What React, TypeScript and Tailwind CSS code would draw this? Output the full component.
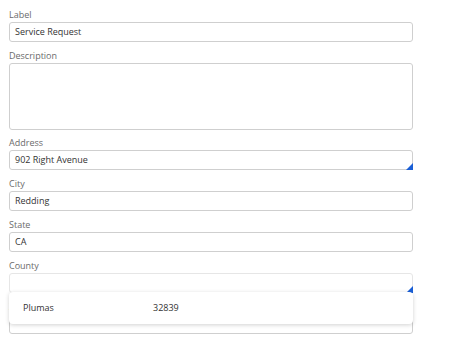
import React from "react";

const font = { fontFamily: '"Open Sans", "Liberation Sans", sans-serif' };

const Corner = () => (
  <svg className="absolute right-[-1px] bottom-[-1px]" width="7" height="7" viewBox="0 0 7 7">
    <polygon points="7,0 7,7 0,7" fill="#1a5fd6" />
  </svg>
);

const Field = (props: { label: string; value?: string; corner?: boolean; light?: boolean }) => (
  <div className="mb-[7px]">
    <div className="text-[9px] leading-[14px] text-[#6b6b6b]">{props.label}</div>
    <div
      className={
        "relative h-[20px] rounded-[3px] border bg-white px-[5px] text-[9px] leading-[18px] text-[#333] " +
        (props.light ? "border-[#e6e6e6]" : "border-[#cfcfcf]")
      }
    >
      {props.value}
      {props.corner && <Corner />}
    </div>
  </div>
);

export default function App() {
  return (
    <div className="w-[474px] h-[355px] bg-white overflow-hidden" style={font}>
      <div className="relative w-[404px] ml-[9px] pt-[8px]">
        <Field label="Label" value="Service Request" />
        <div className="mb-[6px]">
          <div className="text-[9px] leading-[14px] text-[#6b6b6b]">Description</div>
          <div className="h-[67px] rounded-[3px] border border-[#cfcfcf] bg-white" />
        </div>
        <Field label="Address" value="902 Right Avenue" corner />
        <Field label="City" value="Redding" />
        <Field label="State" value="CA" />
        <div className="relative">
          <Field label="County" corner light />
          <Field label="Zip" />
          <div className="absolute left-0 right-0 top-[33px] h-[32px] rounded-[4px] bg-white shadow-[0_1px_4px_rgba(0,0,0,0.18)] flex items-center text-[9px] text-[#333]">
            <span className="w-[144px] pl-[14px]">Plumas</span>
            <span>32839</span>
          </div>
        </div>
      </div>
    </div>
  );
}
